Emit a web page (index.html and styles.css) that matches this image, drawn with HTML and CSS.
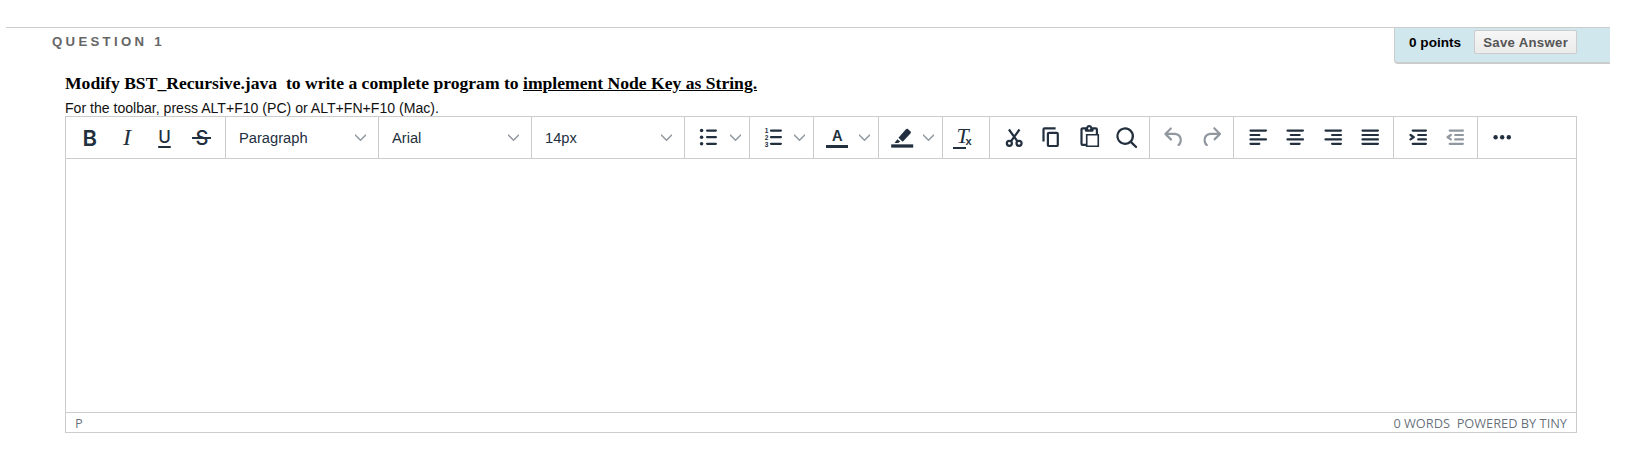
FILE: index.html
```html
<!DOCTYPE html>
<html lang="en">
<head>
<meta charset="utf-8">
<title>Question 1</title>
<link rel="stylesheet" href="styles.css">
</head>
<body>
<svg class="defs" width="0" height="0" aria-hidden="true">
  <defs>
    <symbol id="chev" viewBox="0 0 10 10"><path d="M0 2.6l5 5 5-5" fill="none" stroke="currentColor" stroke-width="1.3"/></symbol>
  </defs>
</svg>
<main class="page">
  <header class="head">
    <h2 class="qtitle">QUESTION 1</h2>
    <div class="points">
      <span class="pts">0 points</span>
      <button class="save" type="button">Save Answer</button>
    </div>
  </header>
  <section class="content">
    <p class="prompt">Modify BST_Recursive.java &nbsp;to write a complete program to <u>implement Node Key as String.</u></p>
    <p class="hint">For the toolbar, press ALT+F10 (PC) or ALT+FN+F10 (Mac).</p>
    <div class="editor">
      <div class="toolbar">
        <div class="group g-fmt">
          <span class="btn"><b class="t-b">B</b></span>
          <span class="btn"><i class="t-i">I</i></span>
          <span class="btn"><span class="t-u">U</span></span>
          <span class="btn"><span class="t-s">S</span></span>
        </div>
        <div class="group g-sel"><span class="sel">Paragraph</span><svg class="chev"><use href="#chev"/></svg></div>
        <div class="group g-sel"><span class="sel">Arial</span><svg class="chev"><use href="#chev"/></svg></div>
        <div class="group g-sel"><span class="sel">14px</span><svg class="chev"><use href="#chev"/></svg></div>
        <div class="group g-split">
          <svg class="ico" viewBox="0 0 24 24"><path d="M11 5h8a1 1 0 0 1 0 2h-8a1 1 0 0 1 0-2zm0 6h8a1 1 0 0 1 0 2h-8a1 1 0 0 1 0-2zm0 6h8a1 1 0 0 1 0 2h-8a1 1 0 0 1 0-2z"/><circle cx="6" cy="6" r="1.6"/><circle cx="6" cy="12" r="1.6"/><circle cx="6" cy="18" r="1.6"/></svg>
          <svg class="chev"><use href="#chev"/></svg>
        </div>
        <div class="group g-split">
          <svg class="ico" viewBox="0 0 24 24"><path d="M10 5h9a1 1 0 0 1 0 2h-9a1 1 0 0 1 0-2zm0 6h9a1 1 0 0 1 0 2h-9a1 1 0 0 1 0-2zm0 6h9a1 1 0 0 1 0 2h-9a1 1 0 0 1 0-2z"/><text class="num" x="4.4" y="8">1</text><text class="num" x="4.4" y="14.4">2</text><text class="num" x="4.4" y="20.6">3</text></svg>
          <svg class="chev"><use href="#chev"/></svg>
        </div>
        <div class="group g-split">
          <span class="ico-box"><span class="t-a">A</span><span class="bar"></span></span>
          <svg class="chev"><use href="#chev"/></svg>
        </div>
        <div class="group g-split">
          <svg class="ico" viewBox="0 0 24 24"><path d="M2 18.5h20V21.5H2z"/><path d="M5 17.2l2.6-3.4 2.6 2.2-1.8 1.2zM8.6 12.6l6.6-7.6c.6-.7 1.6-.8 2.2-.2l2 1.7c.7.6.7 1.6.1 2.2l-7 7.4z"/></svg>
          <svg class="chev"><use href="#chev"/></svg>
        </div>
        <div class="group g-one">
          <span class="t-clear"><i>T</i><small>x</small><span class="bar-s"></span></span>
        </div>
        <div class="group g-edit">
          <span class="btn"><svg class="ico" viewBox="0 0 24 24"><g fill="none" stroke="currentColor" stroke-width="2"><circle cx="7.6" cy="17.6" r="2.3"/><circle cx="16.4" cy="17.6" r="2.3"/><path d="M9 15.8L16.8 5M15 15.8L7.2 5"/></g></svg></span>
          <span class="btn"><svg class="ico" viewBox="0 0 24 24"><path d="M16 3H6a2 2 0 0 0-2 2v11h2V5h10V3zm1 4a2 2 0 0 1 2 2v10a2 2 0 0 1-2 2h-7a2 2 0 0 1-2-2V9c0-1.2.9-2 2-2h7zm0 12V9h-7v10h7z"/></svg></span>
          <span class="btn"><svg class="ico" viewBox="0 0 24 24"><path d="M18 9V5h-2v1c0 .6-.4 1-1 1H9a1 1 0 0 1-1-1V5H6v13h3V9h9zM9 20H6a2 2 0 0 1-2-2V5c0-1.1.9-2 2-2h3.2A3 3 0 0 1 12 1a3 3 0 0 1 2.8 2H18a2 2 0 0 1 2 2v4h1v12H9v-1zm1.5-9.5v9h9v-9h-9zM12 3a1 1 0 0 0-1 1c0 .5.4 1 1 1s1-.5 1-1-.4-1-1-1z"/></svg></span>
          <span class="btn"><svg class="ico" viewBox="0 0 24 24"><path d="M16 17.3a8 8 0 1 1 1.4-1.4l4.3 4.4a1 1 0 0 1-1.4 1.4l-4.4-4.3zm-5-.3a6 6 0 1 0 0-12 6 6 0 0 0 0 12z"/></svg></span>
        </div>
        <div class="group g-hist">
          <span class="btn off"><svg class="ico" viewBox="0 0 24 24"><path d="M6.4 8H12c3.7 0 6.2 2 6.8 5.1.6 2.7-.4 5.6-2.3 6.8a1 1 0 0 1-1-1.8c1.1-.6 1.8-2.7 1.4-4.6-.5-2.1-2.1-3.5-4.9-3.5H6.4l3.3 3.3a1 1 0 1 1-1.4 1.4l-5-5a1 1 0 0 1 0-1.4l5-5a1 1 0 0 1 1.4 1.4L6.4 8z"/></svg></span>
          <span class="btn off"><svg class="ico" viewBox="0 0 24 24"><path d="M17.6 10H12c-2.8 0-4.4 1.4-4.9 3.5-.4 2 .3 4 1.4 4.6a1 1 0 1 1-1 1.8c-2-1.2-2.9-4.1-2.3-6.8.6-3 3-5.1 6.8-5.1h5.6l-3.3-3.3a1 1 0 1 1 1.4-1.4l5 5a1 1 0 0 1 0 1.4l-5 5a1 1 0 0 1-1.4-1.4l3.3-3.3z"/></svg></span>
        </div>
        <div class="group g-align">
          <span class="btn"><svg class="ico" viewBox="0 0 24 24"><path d="M5 5h14c.6 0 1 .4 1 1s-.4 1-1 1H5a1 1 0 1 1 0-2zm0 4h8c.6 0 1 .4 1 1s-.4 1-1 1H5a1 1 0 1 1 0-2zm0 8h8c.6 0 1 .4 1 1s-.4 1-1 1H5a1 1 0 0 1 0-2zm0-4h14c.6 0 1 .4 1 1s-.4 1-1 1H5a1 1 0 0 1 0-2z"/></svg></span>
          <span class="btn"><svg class="ico" viewBox="0 0 24 24"><path d="M5 5h14c.6 0 1 .4 1 1s-.4 1-1 1H5a1 1 0 1 1 0-2zm3 4h8c.6 0 1 .4 1 1s-.4 1-1 1H8a1 1 0 1 1 0-2zm0 8h8c.6 0 1 .4 1 1s-.4 1-1 1H8a1 1 0 0 1 0-2zm-3-4h14c.6 0 1 .4 1 1s-.4 1-1 1H5a1 1 0 0 1 0-2z"/></svg></span>
          <span class="btn"><svg class="ico" viewBox="0 0 24 24"><path d="M5 5h14c.6 0 1 .4 1 1s-.4 1-1 1H5a1 1 0 1 1 0-2zm6 4h8c.6 0 1 .4 1 1s-.4 1-1 1h-8a1 1 0 0 1 0-2zm0 8h8c.6 0 1 .4 1 1s-.4 1-1 1h-8a1 1 0 0 1 0-2zm-6-4h14c.6 0 1 .4 1 1s-.4 1-1 1H5a1 1 0 0 1 0-2z"/></svg></span>
          <span class="btn"><svg class="ico" viewBox="0 0 24 24"><path d="M5 5h14c.6 0 1 .4 1 1s-.4 1-1 1H5a1 1 0 1 1 0-2zm0 4h14c.6 0 1 .4 1 1s-.4 1-1 1H5a1 1 0 1 1 0-2zm0 8h14c.6 0 1 .4 1 1s-.4 1-1 1H5a1 1 0 0 1 0-2zm0-4h14c.6 0 1 .4 1 1s-.4 1-1 1H5a1 1 0 0 1 0-2z"/></svg></span>
        </div>
        <div class="group g-ind">
          <span class="btn"><svg class="ico" viewBox="0 0 24 24"><path d="M7 5h12c.6 0 1 .4 1 1s-.4 1-1 1H7a1 1 0 1 1 0-2zm5 4h7c.6 0 1 .4 1 1s-.4 1-1 1h-7a1 1 0 0 1 0-2zm0 4h7c.6 0 1 .4 1 1s-.4 1-1 1h-7a1 1 0 0 1 0-2zm-5 4h12a1 1 0 0 1 0 2H7a1 1 0 0 1 0-2zm-2.6-3.8L6.2 12l-1.8-1.2a1 1 0 0 1 1.2-1.6l3 2a1 1 0 0 1 0 1.6l-3 2a1 1 0 1 1-1.2-1.6z"/></svg></span>
          <span class="btn off"><svg class="ico" viewBox="0 0 24 24"><path d="M7 5h12c.6 0 1 .4 1 1s-.4 1-1 1H7a1 1 0 1 1 0-2zm5 4h7c.6 0 1 .4 1 1s-.4 1-1 1h-7a1 1 0 0 1 0-2zm0 4h7c.6 0 1 .4 1 1s-.4 1-1 1h-7a1 1 0 0 1 0-2zm-5 4h12a1 1 0 0 1 0 2H7a1 1 0 0 1 0-2zm1.6-3.8a1 1 0 0 1-1.2 1.6l-3-2a1 1 0 0 1 0-1.6l3-2a1 1 0 0 1 1.2 1.6L6.8 12l1.8 1.2z"/></svg></span>
        </div>
        <div class="group g-more">
          <span class="btn"><svg class="ico" viewBox="0 0 24 24"><circle cx="6" cy="12" r="2"/><circle cx="12" cy="12" r="2"/><circle cx="18" cy="12" r="2"/></svg></span>
        </div>
      </div>
      <div class="area"></div>
      <div class="status">
        <span class="path">P</span>
        <span class="right">0 WORDS &nbsp;POWERED BY TINY</span>
      </div>
    </div>
  </section>
</main>
</body>
</html>
```
FILE: styles.css
```css
* { box-sizing: border-box; }
html, body { margin: 0; padding: 0; background: #fff; }
body { font-family: "Liberation Sans", Arial, sans-serif; color: #000; height: 457px; overflow: hidden; }
.defs { position: absolute; }
.page { padding: 27px 15px 0 6px; }

.head { display: flex; justify-content: space-between; align-items: flex-start; border-top: 1px solid #ccc; height: 35px; }
.qtitle { margin: 0; padding: 6px 0 0 46px; font-size: 13.2px; line-height: 16px; font-weight: bold; letter-spacing: 3.3px; color: #666; }
.points { display: flex; flex: none; align-items: center; width: 216px; height: 37px; margin-top: -1px; padding: 0 0 6px 14px; background: #d1e7ee; border-top: 1px solid #ccc; border-bottom: 2px solid #ccc; border-left: 1px solid #ccc; border-bottom-left-radius: 4px; }
.pts { font-size: 13.6px; font-weight: bold; color: #000; }
.save { margin-left: 13px; width: 103px; height: 24px; padding: 0; font: bold 13.2px "Liberation Sans", Arial, sans-serif; letter-spacing: .3px; color: #555; background: linear-gradient(#f6f6f6, #ebebeb); border: 1px solid #ccc; border-radius: 2px; }

.content { padding: 11px 0 0 59px; }
.prompt { margin: 0; font: bold 17.6px/20px "Liberation Serif", "Times New Roman", serif; color: #000; }
.hint { margin: 8px 0 0; font-size: 14.08px; line-height: 15px; color: #111; }

.editor { display: flex; flex-direction: column; width: 1512px; height: 317px; border: 1px solid #ccc; }
.toolbar { display: flex; height: 42px; border-bottom: 1px solid #ccc; color: #222f3e; }
.group { display: flex; align-items: center; height: 41px; border-right: 1px solid #ccc; flex: none; }
.group:last-child { border-right: 0; }
.g-fmt { width: 160px; padding-left: 5px; }
.g-sel { width: 153px; padding: 0 12px 0 13px; justify-content: space-between; }
.g-split { width: 64.6px; padding: 0 8px 0 10px; justify-content: space-between; }
.g-one { width: 47px; padding-left: 9px; }
.g-edit { width: 160px; padding-left: 5px; }
.g-hist { width: 84px; padding-left: 5px; }
.g-align { width: 160px; padding-left: 5px; }
.g-ind { width: 84px; padding-left: 5px; }
.g-more { padding-left: 5px; }
.btn { display: flex; align-items: center; justify-content: center; width: 37.4px; height: 36px; color: #222f3e; }
.btn.off { color: rgba(34, 47, 62, .5); }
.ico { width: 26.4px; height: 26.4px; fill: currentColor; flex: none; display: block; }
.chev { width: 11px; height: 11px; color: rgba(34, 47, 62, .5); flex: none; }
.sel { font-size: 14.7px; color: #222f3e; }
.num { font: bold 6px "Liberation Sans", Arial, sans-serif; fill: currentColor; }

.t-b { font: 600 22px "Inter", sans-serif; }
.t-i { font: italic 24px "Liberation Serif", serif; }
.t-u { font: 500 17px/17px "Inter", sans-serif; text-decoration: underline; text-underline-offset: 3px; text-decoration-thickness: 2px; }
.t-s { position: relative; font: 500 20px "Inter", sans-serif; }
.t-s::after { content: ""; position: absolute; left: -3px; right: -3px; top: 50%; height: 2px; margin-top: -1px; background: currentColor; }
.ico-box { display: flex; flex-direction: column; align-items: center; width: 26px; }
.t-a { font: 600 14.5px/15px "Inter", sans-serif; }
.bar { display: block; width: 22px; height: 3px; margin-top: 2px; background: currentColor; }
.t-clear { position: relative; display: block; width: 24px; height: 26px; font: italic 22px/22px "Liberation Serif", serif; }
.t-clear i { position: absolute; left: 4px; top: 0; }
.t-clear small { position: absolute; left: 13px; top: 10px; font: bold 11px/12px "Liberation Sans", sans-serif; }
.bar-s { position: absolute; left: 1px; top: 22px; width: 13px; height: 2px; background: currentColor; }

.area { flex: 1; }
.status { display: flex; justify-content: space-between; align-items: center; height: 20px; padding: 0 9px; border-top: 1px solid #ccc; font: 12.8px "Open Sans", sans-serif; color: rgba(34, 47, 62, .7); }
```
